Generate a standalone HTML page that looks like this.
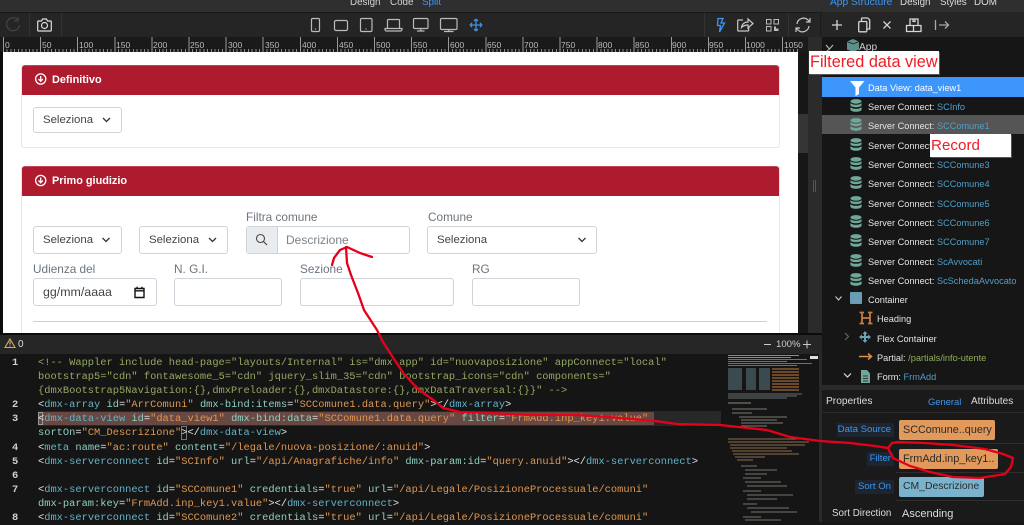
<!DOCTYPE html>
<html><head><meta charset="utf-8"><style>
*{box-sizing:border-box}
html,body{margin:0;padding:0;width:1024px;height:522px;overflow:hidden;background:#161616;font-family:"Liberation Sans",sans-serif}
.a,.r,.c,.t,.b,.l{position:absolute}
.a{white-space:nowrap}
.card{position:absolute;left:21px;width:759px;background:#fff;border:1px solid #e4e6ea;border-radius:3px}
.hd{position:absolute;left:22px;width:757px;height:30px;background:#ae1a2e;color:#fff;font-size:10.9px;font-weight:bold;line-height:29px;padding-left:30px;border-top:1px solid #c0475a;border-radius:3px 3px 0 0}
.f{position:absolute;height:28px;border:1px solid #ced4da;border-radius:3px;background:#fff;color:#444;font-size:11.4px;line-height:26px;padding-left:9px;white-space:nowrap}
.lb{position:absolute;font-size:11.8px;color:#6c757d;white-space:nowrap}
.t{font-size:9.2px;color:#e4e4e4;white-space:nowrap;line-height:14px;left:868px}
.t i{font-style:normal;color:#4f9fc9}
.tick{position:absolute;top:40px;font-size:8.5px;color:#bbb;line-height:10px}
pre{position:absolute;left:38px;top:356px;margin:0;font:10.38px/14.1px "Liberation Mono",monospace;color:#e0e0e0;white-space:pre}
.g{color:#94a862}.y{color:#62b4c8}.n{color:#8fd0c0}.s{color:#e09650}.m{color:#e4e4e4}
.ln{position:absolute;left:12px;font:bold 10.4px/14px "Liberation Mono",monospace;color:#cfcfcf}
.bd{position:absolute;left:899px;height:20px;border-radius:2px;font-size:10.8px;line-height:20px;padding-left:4px;color:#2a2a2a;white-space:nowrap}
.pl{position:absolute;font-size:9.6px;line-height:14px;color:#3f97ee;white-space:nowrap;text-align:right;padding-right:3px;height:14px;background:#1c2530}
</style></head><body>
<svg width="0" height="0" style="position:absolute"><defs>
<symbol id="db" viewBox="0 0 12 13"><ellipse cx="6" cy="2.4" rx="5.6" ry="2.3" fill="#6fa89a"/><path d="M.4 4v2c0 1.3 2.5 2.2 5.6 2.2s5.6-.9 5.6-2.2V4C10.500 5.300 8.500 5.700 6 5.700S1.500 5.300.4 4zM.4 8v2.500c0 1.300 2.500 2.300 5.600 2.300s5.600-1 5.600-2.300V8c-1.100 1.300-3.100 1.800-5.600 1.800S1.500 9.300.4 8z" fill="#6fa89a"/></symbol>
</defs></svg>

<!-- top chrome -->
<div class="r" style="left:0;top:0;width:822px;height:12px;background:#2f2f2f"></div>
<div class="r" style="left:0;top:12px;width:822px;height:25px;background:#252525;border-top:1px solid #1a1a1a"></div>
<div class="r" style="left:0;top:37px;width:808px;height:15px;background:#1a1a1a"></div>
<div class="r" style="left:3px;top:49px;width:795px;height:3px;background:repeating-linear-gradient(90deg,#8a8a8a 0 1px,transparent 1px 3.71px)"></div>
<div class="r" style="left:3px;top:37px;width:795px;height:15px;background:repeating-linear-gradient(90deg,#999 0 1px,transparent 1px 37.1px)"></div>
<div class="a" style="left:350px;top:-4px;font-size:9.8px;color:#d5d5d5;line-height:14px">Design</div>
<div class="a" style="left:390px;top:-4px;font-size:9.8px;color:#d5d5d5;line-height:14px">Code</div>
<div class="a" style="left:422px;top:-4px;font-size:9.8px;color:#3d96f5;line-height:14px">Split</div>
<div class="tick" style="left:5px">0</div><div class="tick" style="left:42px">50</div><div class="tick" style="left:79px">100</div><div class="tick" style="left:116px">150</div><div class="tick" style="left:153px">200</div><div class="tick" style="left:190px">250</div><div class="tick" style="left:228px">300</div><div class="tick" style="left:265px">350</div><div class="tick" style="left:302px">400</div><div class="tick" style="left:339px">450</div><div class="tick" style="left:376px">500</div><div class="tick" style="left:413px">550</div><div class="tick" style="left:450px">600</div><div class="tick" style="left:487px">650</div><div class="tick" style="left:524px">700</div><div class="tick" style="left:561px">750</div><div class="tick" style="left:598px">800</div><div class="tick" style="left:635px">850</div><div class="tick" style="left:672px">900</div><div class="tick" style="left:709px">950</div><div class="tick" style="left:746px">1000</div><div class="tick" style="left:784px">1050</div>

<!-- canvas -->
<div class="r" style="left:0;top:52px;width:3px;height:282px;background:#0c0c0c"></div>
<div class="r" style="left:3px;top:52px;width:795px;height:281px;background:#fff"></div>
<div class="r" style="left:798px;top:52px;width:10px;height:281px;background:#171717"></div>
<div class="r" style="left:798px;top:114px;width:10px;height:39px;background:#353535"></div>
<div class="r" style="left:808px;top:37px;width:14px;height:297px;background:#2b2b2b"></div>
<div class="r" style="left:813px;top:180px;width:1px;height:12px;background:#555"></div>
<div class="r" style="left:815px;top:180px;width:1px;height:12px;background:#555"></div>

<div class="card" style="top:65px;height:83px"></div>
<div class="hd" style="top:65px">Definitivo</div>
<div class="f" style="left:33px;top:107px;width:89px;height:26px;line-height:24px">Seleziona</div>

<div class="card" style="top:166px;height:170px"></div>
<div class="hd" style="top:166px">Primo giudizio</div>
<div class="f" style="left:33px;top:226px;width:89px">Seleziona</div>
<div class="f" style="left:139px;top:226px;width:89px">Seleziona</div>
<div class="lb" style="left:246px;top:210px">Filtra comune</div>
<div class="f" style="left:246px;top:226px;width:164px;padding-left:39px;color:#7b838a;font-size:12px"><span style="position:absolute;left:0;top:0;width:31px;height:26px;background:#e9ecef;border-right:1px solid #ced4da"></span>Descrizione</div>
<div class="lb" style="left:428px;top:210px">Comune</div>
<div class="f" style="left:427px;top:226px;width:170px">Seleziona</div>
<div class="lb" style="left:33px;top:262px">Udienza del</div>
<div class="f" style="left:33px;top:278px;width:124px;font-size:12.4px">gg/mm/aaaa</div>
<div class="lb" style="left:174px;top:262px">N. G.I.</div>
<div class="f" style="left:174px;top:278px;width:108px"></div>
<div class="lb" style="left:300px;top:262px">Sezione</div>
<div class="f" style="left:300px;top:278px;width:154px"></div>
<div class="lb" style="left:472px;top:262px">RG</div>
<div class="f" style="left:472px;top:278px;width:108px"></div>
<div class="r" style="left:33px;top:321px;width:734px;height:1px;background:#ccd0d5"></div>

<!-- status bar -->
<div class="r" style="left:0;top:333px;width:822px;height:2px;background:#0b0b0b"></div>
<div class="r" style="left:0;top:335px;width:822px;height:19px;background:#262626"></div>
<div class="a" style="left:18px;top:338px;font-size:10px;color:#ddd;line-height:14px">0</div>
<div class="a" style="left:776px;top:338px;font-size:9.6px;color:#ccc;line-height:14px">100%</div>

<!-- code -->
<div class="r" style="left:0;top:354px;width:820px;height:168px;background:#151515"></div>
<div class="r" style="left:38px;top:411px;width:683px;height:15px;background:#282828"></div>
<div class="r" style="left:38px;top:412px;width:616px;height:13px;background:#674843"></div>
<div class="r" style="left:38px;top:412px;width:5px;height:13px;border:1px solid #999"></div>
<div class="r" style="left:181px;top:426px;width:6px;height:14px;border:1px solid #777"></div>
<div class="ln" style="top:356px">1</div><div class="ln" style="top:398px">2</div><div class="ln" style="top:412px">3</div><div class="ln" style="top:441px">4</div><div class="ln" style="top:455px">5</div><div class="ln" style="top:469px">6</div><div class="ln" style="top:483px">7</div><div class="ln" style="top:511px">8</div>
<pre><span class="g">&lt;!-- Wappler include head-page="layouts/Internal" is="dmx-app" id="nuovaposizione" appConnect="local"
bootstrap5="cdn" fontawesome_5="cdn" jquery_slim_35="cdn" bootstrap_icons="cdn" components="
{dmxBootstrap5Navigation:{},dmxPreloader:{},dmxDatastore:{},dmxDataTraversal:{}}" --&gt;</span>
<span class="m">&lt;</span><span class="y">dmx-array</span> <span class="n">id</span><span class="m">=</span><span class="s">"ArrComuni"</span> <span class="n">dmx-bind:items</span><span class="m">=</span><span class="s">"SCComune1.data.query"</span><span class="m">&gt;&lt;/</span><span class="y">dmx-array</span><span class="m">&gt;</span>
<span class="m">&lt;</span><span class="y">dmx-data-view</span> <span class="n">id</span><span class="m">=</span><span class="s">"data_view1"</span> <span class="n">dmx-bind:data</span><span class="m">=</span><span class="s">"SCComune1.data.query"</span> <span class="n">filter</span><span class="m">=</span><span class="s">"FrmAdd.inp_key1.value"</span>
<span class="n">sortOn</span><span class="m">=</span><span class="s">"CM_Descrizione"</span><span class="m">&gt;&lt;/</span><span class="y">dmx-data-view</span><span class="m">&gt;</span>
<span class="m">&lt;</span><span class="y">meta</span> <span class="n">name</span><span class="m">=</span><span class="s">"ac:route"</span> <span class="n">content</span><span class="m">=</span><span class="s">"/legale/nuova-posizione/:anuid"</span><span class="m">&gt;</span>
<span class="m">&lt;</span><span class="y">dmx-serverconnect</span> <span class="n">id</span><span class="m">=</span><span class="s">"SCInfo"</span> <span class="n">url</span><span class="m">=</span><span class="s">"/api/Anagrafiche/info"</span> <span class="n">dmx-param:id</span><span class="m">=</span><span class="s">"query.anuid"</span><span class="m">&gt;&lt;/</span><span class="y">dmx-serverconnect</span><span class="m">&gt;</span>

<span class="m">&lt;</span><span class="y">dmx-serverconnect</span> <span class="n">id</span><span class="m">=</span><span class="s">"SCComune1"</span> <span class="n">credentials</span><span class="m">=</span><span class="s">"true"</span> <span class="n">url</span><span class="m">=</span><span class="s">"/api/Legale/PosizioneProcessuale/comuni"</span>
<span class="n">dmx-param:key</span><span class="m">=</span><span class="s">"FrmAdd.inp_key1.value"</span><span class="m">&gt;&lt;/</span><span class="y">dmx-serverconnect</span><span class="m">&gt;</span>
<span class="m">&lt;</span><span class="y">dmx-serverconnect</span> <span class="n">id</span><span class="m">=</span><span class="s">"SCComune2"</span> <span class="n">credentials</span><span class="m">=</span><span class="s">"true"</span> <span class="n">url</span><span class="m">=</span><span class="s">"/api/Legale/PosizioneProcessuale/comuni"</span></pre>

<!-- minimap -->
<svg class="r" style="left:727px;top:354px" width="92" height="168">
<g stroke-width="1" fill="none">
<path d="M1 1.500H72M1 3.500H64" stroke="#9a8a60"/><path d="M1 5.500H80M1 7.500H60" stroke="#4d7f90"/><path d="M1 9.500H85M1 11.500H70" stroke="#8a6a45"/>
<path d="M1 15H43M1 17H43M1 19H43M1 21H43M1 23H43M1 25H43M1 27H43M1 29H43M1 31H43M1 33H43M1 35H43" stroke="#5e7f88" stroke-dasharray="14 4 10 3"/>
<path d="M45 15H72M45 18H72M45 21H72M45 24H72M45 27H72M45 30H72M45 33H72M45 36H72" stroke="#c17c3c"/>
<path d="M1 40H75M1 42H70M1 44H60" stroke="#66706e"/><path d="M1 49H24" stroke="#888"/>
<path d="M5 55H40M5 59H25M12 63H60M14 66H50M14 69H56M14 72H40" stroke="#7a7a70"/>
<path d="M1 85H70M1 88H82M3 91H78M3 94H60M5 97H65M6 100H72M8 103H38M10 106H26" stroke="#8b6d4c"/>
<path d="M14 112H30M18 116H50M18 120H40M16 124H34M18 128H54M20 132H60M16 137H34M20 141H66M20 145H50M16 150H30M20 154H62M24 158H70M16 163H34M18 166H54" stroke="#77746a"/>
</g>
<rect x="83" y="2" width="8" height="3" fill="#ddd"/>
</svg>
<div class="r" style="left:819px;top:354px;width:3px;height:168px;background:#2a2a2a"></div>

<!-- right panel -->
<div class="r" style="left:822px;top:0;width:202px;height:12px;background:#2f2f2f"></div>
<div class="r" style="left:822px;top:12px;width:202px;height:25px;background:#252525"></div>
<div class="r" style="left:822px;top:37px;width:202px;height:348px;background:#161616"></div>
<div class="a" style="left:830px;top:-4px;font-size:10.2px;color:#3d96f5;line-height:14px">App Structure</div>
<div class="a" style="left:900px;top:-4px;font-size:9.8px;color:#ddd;line-height:14px">Design</div>
<div class="a" style="left:940px;top:-4px;font-size:9.8px;color:#ddd;line-height:14px">Styles</div>
<div class="a" style="left:974px;top:-4px;font-size:9.8px;color:#ddd;line-height:14px">DOM</div>
<div class="a" style="left:859px;top:41px;font-size:10.2px;color:#ccc;line-height:14px">App</div>
<div class="r" style="left:822px;top:77px;width:202px;height:20px;background:#3d96fb"></div>
<div class="r" style="left:822px;top:115px;width:202px;height:19px;background:#555"></div>
<div class="t" style="top:81px;color:#fff">Data View: data_view1</div>
<div class="t" style="top:100px">Server Connect: <i>SCInfo</i></div>
<div class="t" style="top:119px">Server Connect: <i>SCComune1</i></div>
<div class="t" style="top:139px">Server Connect: <i>SCComune2</i></div>
<div class="t" style="top:158px">Server Connect: <i>SCComune3</i></div>
<div class="t" style="top:177px">Server Connect: <i>SCComune4</i></div>
<div class="t" style="top:197px">Server Connect: <i>SCComune5</i></div>
<div class="t" style="top:216px">Server Connect: <i>SCComune6</i></div>
<div class="t" style="top:235px">Server Connect: <i>SCComune7</i></div>
<div class="t" style="top:255px">Server Connect: <i>ScAvvocati</i></div>
<div class="t" style="top:274px">Server Connect: <i>ScSchedaAvvocato</i></div>
<div class="t" style="top:293px">Container</div>
<div class="t" style="top:312px;left:877px">Heading</div>
<div class="t" style="top:332px;left:877px">Flex Container</div>
<div class="t" style="top:351px;left:877px">Partial: <i style="color:#8fae5a">/partials/info-utente</i></div>
<div class="t" style="top:370px;left:877px">Form: <i>FrmAdd</i></div>

<!-- properties -->
<div class="r" style="left:822px;top:385px;width:202px;height:137px;background:#1a1a1a;border-top:5px solid #2b2b2b"></div>
<div class="r" style="left:822px;top:412px;width:202px;height:1px;background:#2b2b2b"></div>
<div class="a" style="left:826px;top:395px;font-size:10.2px;color:#ddd;line-height:14px">Properties</div>
<div class="a" style="left:928px;top:395px;font-size:9.4px;color:#3f97ee;line-height:14px">General</div>
<div class="a" style="left:971px;top:395px;font-size:10px;color:#ddd;line-height:14px">Attributes</div>
<div class="pl" style="left:837px;top:423px;width:57px">Data Source</div>
<div class="pl" style="left:867px;top:452px;width:27px">Filter</div>
<div class="pl" style="left:855px;top:480px;width:39px">Sort On</div>
<div class="a" style="left:832px;top:507px;font-size:9.8px;color:#ddd;line-height:14px">Sort Direction</div>
<div class="a" style="left:902px;top:507px;font-size:11px;color:#ddd;line-height:14px">Ascending</div>
<div class="r" style="left:896px;top:443px;width:128px;height:1px;background:#2e2e2e"></div>
<div class="r" style="left:896px;top:472px;width:128px;height:1px;background:#2e2e2e"></div>
<div class="r" style="left:896px;top:500px;width:128px;height:1px;background:#2e2e2e"></div>
<div class="bd" style="top:420px;width:96px;background:#e19a5b">SCComune..query</div>
<div class="bd" style="top:449px;width:99px;background:#e19a5b;font-size:10.9px">FrmAdd.inp_key1..</div>
<div class="bd" style="top:477px;width:85px;background:#79b3cd;font-size:10.4px">CM_Descrizione</div>

<!-- icons -->
<svg class="r" style="left:0;top:0" width="1024" height="522" fill="none">
<!-- dividers -->
<path d="M29.500 13V37M61.500 13V37M704.500 13V37M788.500 13V37" stroke="#333"/>
<path d="M820.500 12V37" stroke="#1a1a1a"/>
<!-- reload -->
<path d="M18 20a6.500 6.500 0 1 0 1.500 5M18 17v4h-4" stroke="#444" stroke-width="1.200"/>
<!-- camera -->
<path d="M38.500 21h3l1-2h4l1 2h3a.8.8 0 0 1 .8.800v8.400a.8.8 0 0 1-.8.800h-12a.8.8 0 0 1-.8-.800v-8.400a.8.8 0 0 1 .8-.800z" stroke="#ddd" stroke-width="1.200"/><circle cx="44.500" cy="25.500" r="3" stroke="#ddd" stroke-width="1.200"/>
<!-- devices -->
<g stroke="#bbb" stroke-width="1.200">
<rect x="311.500" y="18.500" width="8" height="13" rx="1.200"/><path d="M315 29h1"/>
<rect x="334.500" y="20.500" width="13" height="10" rx="1.500"/>
<rect x="360.500" y="18.500" width="11.500" height="13" rx="1.200"/><path d="M365.500 29h1"/>
<path d="M387.500 28V20.500a1 1 0 0 1 1-1h10a1 1 0 0 1 1 1V28M385 28.500h17v1a1.500 1.500 0 0 1-1.500 1.500h-14a1.500 1.500 0 0 1-1.500-1.500z"/>
<rect x="413.500" y="18.500" width="14.500" height="10" rx="1.200"/><path d="M420.800 28.500v2.500M417 31h7.500"/>
<rect x="440.500" y="18.500" width="16.500" height="11" rx="1.200"/><path d="M448.800 29.500v2M444 31.500h9.500"/>
</g>
<!-- move -->
<path d="M476 19V31M470 25H482M476 19l-2 2M476 19l2 2M476 31l-2-2M476 31l2-2M470 25l2-2M470 25l2 2M482 25l-2-2M482 25l-2 2" stroke="#3d8fe0" stroke-width="1.300"/>
<!-- bolt -->
<path d="M718 18.500h5l-2 4.500h3.500l-5 9 1-6.500h-3z" stroke="#3d96f5" stroke-width="1.300"/>
<!-- share -->
<path d="M743 20h-4.500a.8.800 0 0 0-.8.800v9.400a.8.800 0 0 0 .8.800h9.400a.8.800 0 0 0 .8-.800V27M741.500 27.500c.5-3.500 3-5.500 6.500-5.500v-3l5 4.500-5 4.500v-3c-2.500 0-4.500.5-6.500 2.500z" stroke="#c8c8c8" stroke-width="1.200"/>
<!-- qr -->
<g stroke="#bbb"><rect x="766.500" y="19.500" width="4.500" height="4.500"/><rect x="774" y="19.500" width="4.500" height="4.500"/><rect x="766.500" y="26.500" width="4.500" height="4.500"/></g><path d="M774 26.500h2v2h2.500v2.500H774z" fill="#bbb"/>
<!-- refresh -->
<path d="M797 24a6.500 6.500 0 0 1 11-4l2 2M810 18v4h-4M809 26a6.500 6.500 0 0 1-11 4l-2-2M796 32v-4h4" stroke="#c8c8c8" stroke-width="1.200"/>
<!-- panel toolbar -->
<g stroke="#d5d5d5" stroke-width="1.300">
<path d="M837 20v10M832 25h10"/>
<path d="M859.500 21.500h6.500a.8.8 0 0 1 .8.800v8.700a.8.8 0 0 1-.8.800h-6.500a.8.8 0 0 1-.8-.800v-8.700zM861.500 21.500v-2.700a.8.8 0 0 1 .8-.800h5.700l-.1 0 1.800 2v9h-2.500"/>
<path d="M883.500 21.500l7 7M890.500 21.500l-7 7"/>
<path d="M906.500 25.500h7v6h-7zM913.500 25.500h7.500v6h-7.500zM910 19h8v6.500h-8zM913 19v2.500h2V19"/>
<path d="M935.500 20v10M939 25h9M945 21.500l3.500 3.500-3.500 3.500" stroke="#aaa"/>
</g>
<!-- tree: App -->
<path d="M826 45l3.500 4 3.500-4M826 52l3.500-3" stroke="#bbb" stroke-width="1.100"/>
<path d="M847 41.500l6-2.500 6 2.500v8l-6 2.500-6-2.500z" fill="#5f8e8a"/><path d="M847 41.500l6 2.500 6-2.500" stroke="#1a1a1a" stroke-width=".8"/>
<!-- filter icon -->
<path d="M850 81h14.500l-5.500 6.500v6.500l-3.500 2v-8.500z" fill="#fff"/>
<!-- db icons -->
<use href="#db" x="850" y="99" width="12" height="13"/><use href="#db" x="850" y="118" width="12" height="13"/><use href="#db" x="850" y="138" width="12" height="13"/><use href="#db" x="850" y="157" width="12" height="13"/><use href="#db" x="850" y="176" width="12" height="13"/><use href="#db" x="850" y="196" width="12" height="13"/><use href="#db" x="850" y="215" width="12" height="13"/><use href="#db" x="850" y="234" width="12" height="13"/><use href="#db" x="850" y="254" width="12" height="13"/><use href="#db" x="850" y="273" width="12" height="13"/>
<!-- container row -->
<path d="M835.500 296.500l3 3.500 3-3.500" stroke="#ccc" stroke-width="1.100"/>
<rect x="850" y="292" width="12" height="12" rx="1" fill="#6b9cb5"/>
<!-- heading -->
<path d="M859.500 312.500h4.500M868 312.500h4.500M859.500 323.500h4.500M868 323.500h4.500M862 312.500v11M870 312.500v11M862 318h8" stroke="#c6793f" stroke-width="1.800"/>
<!-- flex -->
<path d="M845 333l3.500 3.500-3.500 3.500" stroke="#666" stroke-width="1.100"/>
<path d="M865 331l2.500 3h-1.500v2h2v-1.500l3 2.500-3 2.500v-1.500h-2v2h1.500l-2.500 3-2.500-3h1.500v-2h-2v1.500l-3-2.500 3-2.500v1.500h2v-2h-1.500z" fill="#6fa0b0"/>
<!-- partial -->
<path d="M859 356.500h12M868 353.500l3.500 3-3.500 3" stroke="#d88f4c" stroke-width="1.500"/>
<!-- form -->
<path d="M844 373.500l3.500 3.500 3.500-3.500" stroke="#ddd" stroke-width="1.200"/>
<path d="M861 370h6l3 3.500V383h-9z" fill="#6fa89a"/><path d="M863 376h5M863 378.500h5M863 381h5" stroke="#1a1a1a" stroke-width=".7"/>
<!-- panel zoom -->
<path d="M764 344.500h7M803 344.500h8M807 340.500v8" stroke="#ccc" stroke-width="1"/>
<!-- warning -->
<path d="M10 339l5 8.500h-10z" stroke="#e0a94a" stroke-width="1.100"/><path d="M10 341.500v3M10 345.500v1" stroke="#ddd" stroke-width=".9"/>
<!-- form circles -->
<g stroke="#fff" stroke-width="1.300"><circle cx="40.700" cy="79" r="5.100"/><path d="M40.700 76v5M38.500 79l2.200 2.300 2.200-2.300"/><circle cx="40.700" cy="180.500" r="5.100"/><path d="M40.700 177.500v5M38.500 180.500l2.200 2.300 2.200-2.300"/></g>
<!-- chevrons -->
<g stroke="#333" stroke-width="1.300"><path d="M103 118l3.500 3.500 3.500-3.500M102.500 238l3.500 3.500 3.500-3.500M209 238l3.500 3.500 3.500-3.500M578.500 238l3.500 3.500 3.500-3.500"/></g>
<!-- search & calendar -->
<circle cx="260.500" cy="238.500" r="4" stroke="#444" stroke-width="1.100"/><path d="M263.500 241.500l3.500 3.500" stroke="#444" stroke-width="1.200"/>
<path d="M135 288.500h9v9h-9zM135 290.800h9M137 286.700v2M142 286.700v2" stroke="#111" stroke-width="1.400"/>
<!-- red annotations -->
<g stroke="#e6001a" stroke-width="2.300" stroke-linecap="round" stroke-linejoin="round">
<path d="M372 257L360 253 347 247 340 250 334 258 332 265"/>
<path d="M346 247L347 263 351 275 358 293 364 310 377 330 383 342 392 356 404 374 419 390 432 399 443 408 460 412 490 413 530 415 577 415 620 418 655 421 677 424 720 425 767 430 790 437 820 441 850 443 875 446 888 448"/>
<path d="M888 448L892 443 898 442 925 443 953 445 985 449 1003 454 1013 458 1011 467 1005 474 980 478 953 477 930 472 910 466 893 458 888 448"/>
</g>
</svg>

<!-- annotation boxes -->
<div class="a" style="left:809px;top:51px;width:130px;height:23px;background:#fff;color:#ee1c25;font-size:16.3px;line-height:23px;padding-left:1px;box-shadow:1px 1px 0 #555">Filtered data view</div>
<div class="a" style="left:930px;top:134px;width:81px;height:23px;background:#fff;color:#ee1c25;font-size:15.2px;line-height:23px;padding-left:1px;box-shadow:1px 1px 0 #555">Record</div>
</body></html>
